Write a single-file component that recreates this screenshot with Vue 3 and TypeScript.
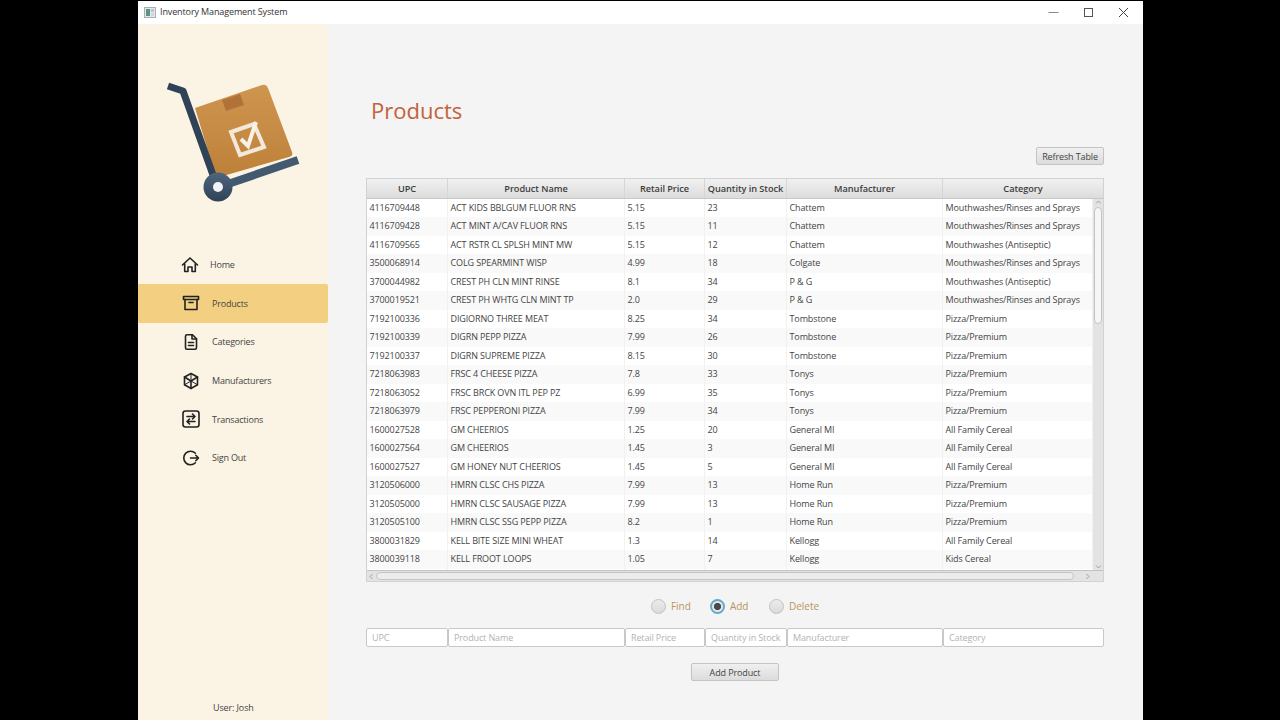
<script setup lang="ts">
interface Product {
  upc: string;
  name: string;
  price: string;
  qty: number;
  maker: string;
  category: string;
}

const navItems = ["Home", "Products", "Categories", "Manufacturers", "Transactions", "Sign Out"];

const columns = ["UPC", "Product Name", "Retail Price", "Quantity in Stock", "Manufacturer", "Category"];

const rinse = "Mouthwashes/Rinses and Sprays";
const anti = "Mouthwashes (Antiseptic)";
const pizza = "Pizza/Premium";
const cereal = "All Family Cereal";

const products: Product[] = [
  { upc: "4116709448", name: "ACT KIDS BBLGUM FLUOR RNS", price: "5.15", qty: 23, maker: "Chattem", category: rinse },
  { upc: "4116709428", name: "ACT MINT A/CAV FLUOR RNS", price: "5.15", qty: 11, maker: "Chattem", category: rinse },
  { upc: "4116709565", name: "ACT RSTR CL SPLSH MINT MW", price: "5.15", qty: 12, maker: "Chattem", category: anti },
  { upc: "3500068914", name: "COLG SPEARMINT WISP", price: "4.99", qty: 18, maker: "Colgate", category: rinse },
  { upc: "3700044982", name: "CREST PH CLN MINT RINSE", price: "8.1", qty: 34, maker: "P & G", category: anti },
  { upc: "3700019521", name: "CREST PH WHTG CLN MINT TP", price: "2.0", qty: 29, maker: "P & G", category: rinse },
  { upc: "7192100336", name: "DIGIORNO THREE MEAT", price: "8.25", qty: 34, maker: "Tombstone", category: pizza },
  { upc: "7192100339", name: "DIGRN PEPP PIZZA", price: "7.99", qty: 26, maker: "Tombstone", category: pizza },
  { upc: "7192100337", name: "DIGRN SUPREME PIZZA", price: "8.15", qty: 30, maker: "Tombstone", category: pizza },
  { upc: "7218063983", name: "FRSC 4 CHEESE PIZZA", price: "7.8", qty: 33, maker: "Tonys", category: pizza },
  { upc: "7218063052", name: "FRSC BRCK OVN ITL PEP PZ", price: "6.99", qty: 35, maker: "Tonys", category: pizza },
  { upc: "7218063979", name: "FRSC PEPPERONI PIZZA", price: "7.99", qty: 34, maker: "Tonys", category: pizza },
  { upc: "1600027528", name: "GM CHEERIOS", price: "1.25", qty: 20, maker: "General MI", category: cereal },
  { upc: "1600027564", name: "GM CHEERIOS", price: "1.45", qty: 3, maker: "General MI", category: cereal },
  { upc: "1600027527", name: "GM HONEY NUT CHEERIOS", price: "1.45", qty: 5, maker: "General MI", category: cereal },
  { upc: "3120506000", name: "HMRN CLSC CHS PIZZA", price: "7.99", qty: 13, maker: "Home Run", category: pizza },
  { upc: "3120505000", name: "HMRN CLSC SAUSAGE PIZZA", price: "7.99", qty: 13, maker: "Home Run", category: pizza },
  { upc: "3120505100", name: "HMRN CLSC SSG PEPP PIZZA", price: "8.2", qty: 1, maker: "Home Run", category: pizza },
  { upc: "3800031829", name: "KELL BITE SIZE MINI WHEAT", price: "1.3", qty: 14, maker: "Kellogg", category: cereal },
  { upc: "3800039118", name: "KELL FROOT LOOPS", price: "1.05", qty: 7, maker: "Kellogg", category: "Kids Cereal" },
];

const modes = ["Find", "Add", "Delete"];
const mode = "Add";
const placeholders = columns;
</script>

<template>
  <div class="screen">
    <div class="window">
      <header class="titlebar">
        <svg class="app-icon" width="12" height="11" viewBox="0 0 12 11">
          <rect x="0.5" y="0.5" width="11" height="10" fill="#e4e8e8" stroke="#a8b2b2" />
          <rect x="2" y="2" width="4" height="7" fill="#5b9487" />
          <rect x="7" y="2" width="3" height="3" fill="#b9c6d2" />
          <rect x="7" y="6" width="3" height="3" fill="#cfd8de" />
        </svg>
        <span class="app-title">Inventory Management System</span>
        <div class="controls">
          <svg width="11" height="11" viewBox="0 0 11 11"><path d="M0.5 5.5h10" stroke="#8a8a8a" fill="none" /></svg>
          <svg width="11" height="11" viewBox="0 0 11 11"><rect x="1.5" y="1.5" width="8" height="8" stroke="#555" fill="none" /></svg>
          <svg width="11" height="11" viewBox="0 0 11 11"><path d="M1 1l9 9M10 1l-9 9" stroke="#444" fill="none" /></svg>
        </div>
      </header>

      <div class="body">
        <aside class="sidebar">
          <svg class="logo" width="190" height="130" viewBox="0 75 190 130">
            <defs>
              <linearGradient id="boxFill" x1="0" y1="0" x2="0" y2="1">
                <stop offset="0" stop-color="#cf9650" />
                <stop offset="1" stop-color="#bd8039" />
              </linearGradient>
              <linearGradient id="wheel" x1="0" y1="0" x2="0" y2="1">
                <stop offset="0" stop-color="#4e667d" />
                <stop offset="1" stop-color="#2f4257" />
              </linearGradient>
            </defs>
            <path d="M57 108 L124 85 Q128 83.5 130 88 L154 152 Q155.5 156 151 157 L78 178 Z" fill="url(#boxFill)" />
            <path d="M84 100 L102 94 L106 105 L88 111 Z" fill="#b1723a" />
            <path d="M30 86 L45 91 L75 175" fill="none" stroke="#2f4257" stroke-width="7" stroke-linejoin="round" />
            <path d="M90 184 L160 160" fill="none" stroke="#43596f" stroke-width="8" />
            <circle cx="80" cy="187" r="14.5" fill="url(#wheel)" />
            <circle cx="80" cy="187" r="5" fill="#f1f2f4" />
            <path d="M93 132 L116 124 L126 147 L102 155 Z" fill="none" stroke="#f3e9da" stroke-width="4" />
            <path d="M103 139 L110 146 L118 122" fill="none" stroke="#f8f2e6" stroke-width="4" />
          </svg>

          <nav class="nav">
            <a
              v-for="item in navItems"
              :key="item"
              class="nav-item"
              :class="{ active: item === 'Products', home: item === 'Home' }"
            >
              <svg class="nav-icon" width="18" height="18" viewBox="0 0 18 18" fill="none" stroke="#222" stroke-width="1.6" stroke-linejoin="round" stroke-linecap="round">
                <template v-if="item === 'Home'">
                  <path d="M1.5 9 L9 2 L16.5 9" />
                  <path d="M3.7 8 V15.5 H7 V11 H11 V15.5 H14.3 V8" />
                </template>
                <template v-else-if="item === 'Products'">
                  <rect x="1.5" y="2.5" width="15" height="3" />
                  <path d="M3 5.5 V15.5 H15 V5.5" />
                  <path d="M7 8.5 H11" />
                </template>
                <template v-else-if="item === 'Categories'">
                  <path d="M5 1.8 H10.5 L14.5 5.8 V14.5 Q14.5 16.2 13 16.2 H5 Q3.5 16.2 3.5 14.5 V3.3 Q3.5 1.8 5 1.8 Z" />
                  <path d="M10 2 V6 H14.5" />
                  <path d="M6.5 9.5 H11.5 M6.5 12.5 H11.5" />
                </template>
                <template v-else-if="item === 'Manufacturers'">
                  <path d="M9 1.5 L15.5 5 V12.8 L9 16.5 L2.5 12.8 V5 Z" />
                  <path d="M2.5 5 L9 9 L15.5 5 M9 9 V16.5" />
                  <path d="M2.5 12.8 L9 9 L15.5 12.8 M9 1.5 V9" stroke-width="1" />
                </template>
                <template v-else-if="item === 'Transactions'">
                  <rect x="1" y="1" width="16" height="16" rx="2.5" />
                  <path d="M5 6.5 H13 M10.5 4 L13 6.5 L10.5 9" />
                  <path d="M13 11.5 H5 M7.5 9 L5 11.5 L7.5 14" />
                </template>
                <template v-else>
                  <path d="M13.4 4.2 A6.8 6.8 0 1 0 13.4 13.8" />
                  <path d="M8.5 9 H16.5 M13.8 6.3 L16.5 9 L13.8 11.7" />
                </template>
              </svg>
              <span>{{ item }}</span>
            </a>
          </nav>

          <div class="user">User: Josh</div>
        </aside>

        <main class="main">
          <h1 class="heading">Products</h1>
          <div class="toolbar">
            <button class="btn refresh">Refresh Table</button>
          </div>

          <section class="table">
            <div class="thead">
              <div v-for="col in columns" :key="col" class="th">{{ col }}</div>
            </div>
            <div class="tbody">
              <div class="rows">
                <div v-for="p in products" :key="p.upc" class="tr">
                  <div class="td">{{ p.upc }}</div>
                  <div class="td">{{ p.name }}</div>
                  <div class="td">{{ p.price }}</div>
                  <div class="td">{{ p.qty }}</div>
                  <div class="td">{{ p.maker }}</div>
                  <div class="td">{{ p.category }}</div>
                </div>
                <div class="tr filler">
                  <div class="td" v-for="n in 6" :key="n"></div>
                </div>
              </div>
              <div class="vbar">
                <svg width="9" height="7" viewBox="0 0 9 7"><path d="M2 4.5 L4.5 2 L7 4.5" fill="none" stroke="#a0a0a0" /></svg>
                <div class="vtrack"><div class="vthumb"></div></div>
                <svg width="9" height="7" viewBox="0 0 9 7"><path d="M2 2.5 L4.5 5 L7 2.5" fill="none" stroke="#a0a0a0" /></svg>
              </div>
            </div>
            <div class="hbar">
              <svg width="9" height="9" viewBox="0 0 9 9"><path d="M5.5 2 L3 4.5 L5.5 7" fill="none" stroke="#a0a0a0" /></svg>
              <div class="hthumb"></div>
              <svg class="hright" width="9" height="9" viewBox="0 0 9 9"><path d="M3.5 2 L6 4.5 L3.5 7" fill="none" stroke="#a0a0a0" /></svg>
            </div>
          </section>

          <div class="radios">
            <label v-for="m in modes" :key="m" class="radio" :class="{ on: m === mode }">
              <span class="dot"></span>
              <span>{{ m }}</span>
            </label>
          </div>

          <div class="inputs">
            <input v-for="ph in placeholders" :key="ph" class="field" :placeholder="ph" />
          </div>

          <div class="actions">
            <button class="btn wide">Add Product</button>
          </div>
        </main>
      </div>
    </div>
  </div>
</template>

<style scoped>
.screen {
  width: 1280px;
  height: 720px;
  background: #000;
  overflow: hidden;
  display: flex;
}

.window {
  width: 1005px;
  margin-left: 138px;
  margin-top: 1px;
  height: 719px;
  display: flex;
  flex-direction: column;
  font-family: "Open Sans", "Noto Sans", sans-serif;
  font-size: 9px;
  letter-spacing: -0.12px;
  color: #3a3a3a;
  background: #f4f4f4;
}

.titlebar {
  height: 23px;
  flex: none;
  background: #fff;
  display: flex;
  align-items: center;
  padding-left: 6px;
}

.app-title {
  margin-left: 4px;
  margin-bottom: 2px;
  color: #333;
}

.controls {
  margin-left: auto;
  display: flex;
  gap: 24px;
  padding-right: 14px;
}

.body {
  flex: 1;
  display: flex;
  min-height: 0;
}

.sidebar {
  width: 190px;
  flex: none;
  background: #fbf4e5;
  display: flex;
  flex-direction: column;
}

.logo {
  margin-top: 51px;
  display: block;
}

.nav {
  margin-top: 40.5px;
  display: flex;
  flex-direction: column;
}

.nav-item {
  height: 38.6px;
  display: flex;
  align-items: center;
  padding-left: 44px;
  gap: 12px;
  letter-spacing: -0.2px;
  color: #444;
}

.nav-item.home {
  padding-left: 43px;
  gap: 11px;
}

.nav-item.active {
  background: #f3d081;
  border-radius: 0 2px 2px 0;
}

.user {
  margin-top: auto;
  margin-bottom: 6px;
  padding-left: 75px;
  color: #444;
}

.main {
  flex: 1;
  padding: 0 39px 0 38px;
  display: flex;
  flex-direction: column;
}

.heading {
  margin: 67px 0 0 5px;
  font-size: 22px;
  line-height: 38px;
  font-weight: 400;
  letter-spacing: 0;
  color: #c2623a;
}

.toolbar {
  display: flex;
  justify-content: flex-end;
  margin-top: 18px;
}

.btn {
  height: 18px;
  padding: 0;
  font: inherit;
  letter-spacing: inherit;
  color: #444;
  border: 1px solid #c4c4c4;
  border-radius: 2px;
  background: linear-gradient(#f0f0f0, #dcdcdc);
}

.btn.refresh {
  width: 68px;
}

.btn.wide {
  width: 88px;
}

.table {
  margin-top: 13px;
  height: 404px;
  box-sizing: border-box;
  border: 1px solid #d2d2d2;
  display: flex;
  flex-direction: column;
  background: #e3e3e3;
}

.thead {
  display: grid;
  grid-template-columns: 81px 177px 80px 82px 156px 160px;
  height: 18.5px;
  flex: none;
  background: linear-gradient(#f1f1f1, #dcdcdc);
  border-bottom: 1px solid #c8c8c8;
}

.th {
  font-size: 9.2px;
  letter-spacing: -0.05px;
  font-weight: 600;
  color: #3d3d3d;
  text-align: center;
  line-height: 19px;
  border-right: 1px solid #d6d6d6;
  white-space: nowrap;
  overflow: hidden;
}

.th:last-child {
  border-right: 0;
}

.tbody {
  display: flex;
  flex: 1;
  min-height: 0;
}

.rows {
  width: 726px;
  flex: none;
  overflow: hidden;
  background: #fff;
}

.tr {
  display: grid;
  grid-template-columns: 81px 177px 80px 82px 156px 150px;
  height: 18.5px;
  background: #fff;
}

.tr:nth-child(even) {
  background: #f9f9f9;
}

.td {
  line-height: 18.5px;
  padding-left: 2.5px;
  color: #444;
  border-right: 1px solid #f1f1f1;
  white-space: nowrap;
  overflow: hidden;
}

.filler {
  height: 4px;
}

.vbar {
  flex: 1;
  display: flex;
  flex-direction: column;
  align-items: center;
}

.vtrack {
  flex: 1;
  width: 100%;
  box-sizing: border-box;
  padding: 1px;
}

.vthumb {
  height: 115px;
  border: 1px solid #c4c4c4;
  border-radius: 4px;
  background: #f6f6f6;
}

.hbar {
  height: 10px;
  flex: none;
  display: flex;
  align-items: center;
  border-top: 1px solid #c2c2c2;
}

.hthumb {
  width: 698px;
  box-sizing: border-box;
  height: 8px;
  border: 1px solid #c4c4c4;
  border-radius: 4px;
  background: #ececec;
}

.hright {
  margin-left: 9px;
}

.radios {
  margin-top: 16px;
  display: flex;
  justify-content: center;
  gap: 19px;
}

.radio {
  display: flex;
  align-items: center;
  gap: 5px;
  min-width: 40px;
  font-size: 10px;
  letter-spacing: 0;
  color: #b8945c;
  height: 16px;
}

.dot {
  width: 15px;
  height: 15px;
  box-sizing: border-box;
  border-radius: 50%;
  border: 1px solid #c2c2c2;
  background: linear-gradient(#ececec, #dadada);
}

.radio.on .dot {
  border: 2px solid #62aacb;
  background: radial-gradient(circle, #4a4a4a 0 3.2px, #e8e8e8 4px);
}

.inputs {
  margin-top: 14px;
  display: grid;
  grid-template-columns: 82px 177px 80px 82px 156px 161px;
}

.field {
  height: 19px;
  min-width: 0;
  box-sizing: border-box;
  padding: 0 5px;
  font: inherit;
  letter-spacing: inherit;
  border: 1px solid #c8c8c8;
  border-radius: 2px;
  background: #fff;
  outline: none;
}

.field::placeholder {
  color: #b3b3b3;
  opacity: 1;
}

.actions {
  margin-top: 16px;
  display: flex;
  justify-content: center;
}
</style>

<style>
html,
body {
  background: #000;
}
</style>
